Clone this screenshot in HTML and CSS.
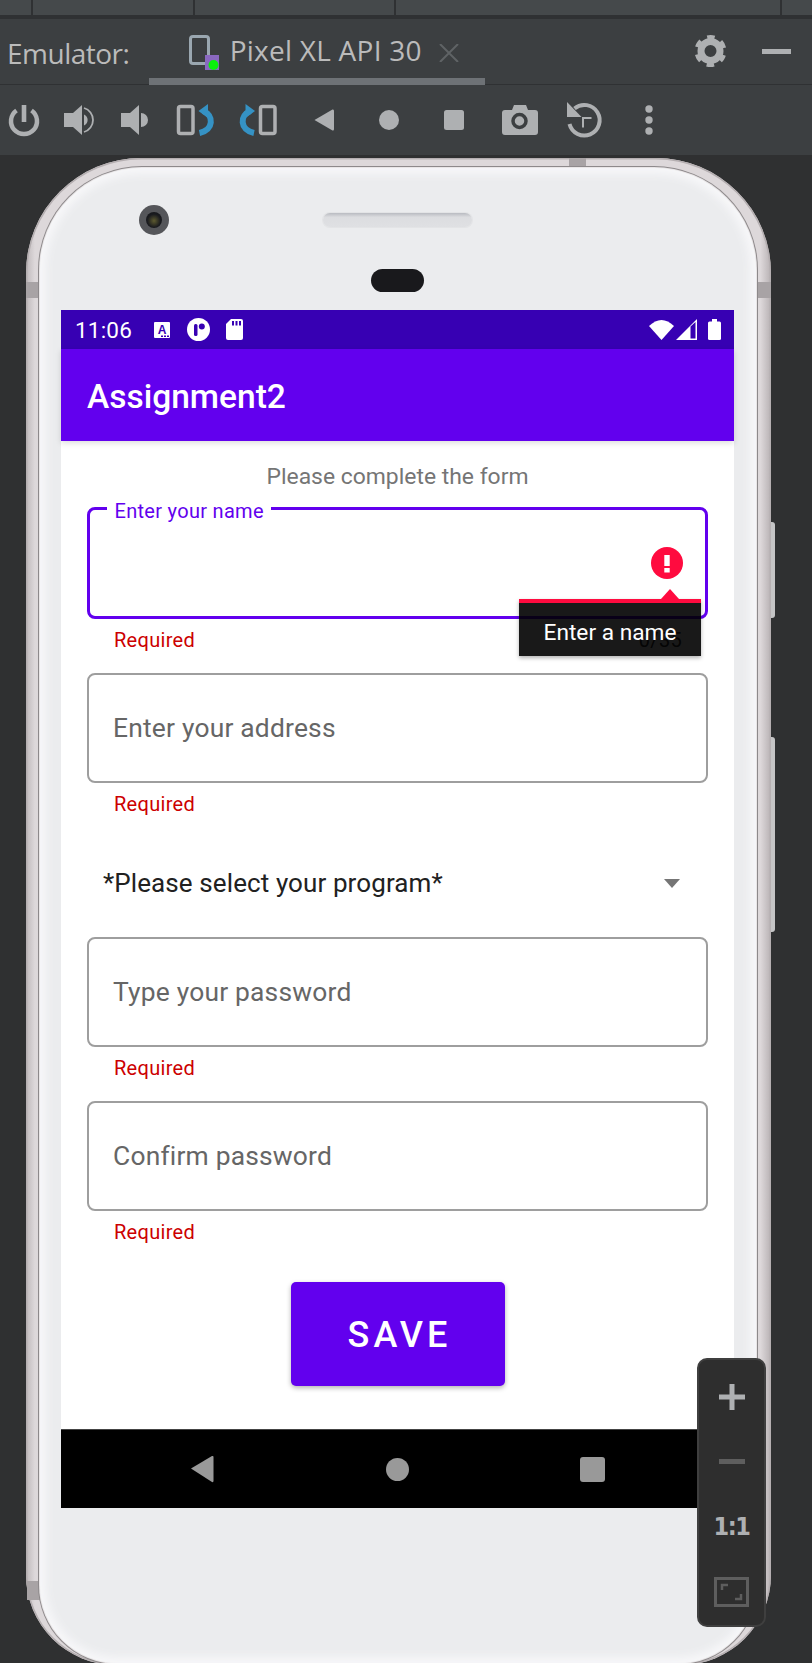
FILE: index.html
```html
<!DOCTYPE html>
<html lang="en">
<head>
<meta charset="utf-8">
<title>Android Emulator - Assignment2</title>
<link rel="stylesheet" href="styles.css">
</head>
<body>
<div class="top-strip">
  <div class="cell cell-a"></div><div class="cell cell-b"></div><div class="cell cell-c"></div><div class="cell cell-d"></div><div class="cell cell-e"></div>
</div>
<header class="tabbar">
  <span class="tab-label">Emulator:</span>
  <div class="tab">
    <svg class="tab-icon" viewBox="186 34 36 38" width="36" height="38">
      <rect x="190.5" y="37.5" width="18" height="27" rx="2.5" fill="none" stroke="#9aa7b0" stroke-width="3"/>
      <rect x="205" y="56" width="14" height="15" fill="#8a68c0"/>
      <circle cx="213.5" cy="66" r="5" fill="#0bf00b"/>
    </svg>
    <span class="tab-title">Pixel XL API 30</span>
    <svg class="tab-close" viewBox="0 0 20 18" width="20" height="18"><path d="M1 0 19 18M19 0 1 18" stroke="#5f6365" stroke-width="2" fill="none"/></svg>
  </div>
  <div class="tab-actions">
    <svg viewBox="694 33 36 36" width="36" height="36">
      <circle cx="711.5" cy="51" r="9.5" fill="none" stroke="#aeb0b2" stroke-width="7"/>
      <circle cx="711.5" cy="51" r="14" fill="none" stroke="#aeb0b2" stroke-width="4" stroke-dasharray="7.33 7.33" stroke-dashoffset="3.66" transform="rotate(30 711.5 51)"/>
    </svg>
    <span class="minimize"></span>
  </div>
</header>
<nav class="toolbar">
  <div class="tool-group tool-group-a">
    <svg viewBox="6 103 36 36" width="36" height="36"><path d="M16.5 111.5A13 13 0 1 0 31.5 111.5" fill="none" stroke="#aeb0b2" stroke-width="4.5"/><rect x="21.7" y="106" width="4.6" height="17" fill="#aeb0b2"/></svg>
    <svg viewBox="60 103 36 36" width="36" height="36"><path d="M64 114H73L82 106V136L73 128H64Z" fill="#aeb0b2"/><path d="M84 115.500A6 6 0 0 1 84 126.500Z" fill="#aeb0b2"/><path d="M84 109A12.500 12.500 0 0 1 84 133" fill="none" stroke="#aeb0b2" stroke-width="1.800"/></svg>
    <svg viewBox="114 103 36 36" width="36" height="36"><path d="M121 114H130L139 106V136L130 128H121Z" fill="#aeb0b2"/><path d="M141 114A7 7 0 0 1 141 128Z" fill="#aeb0b2"/></svg>
  </div>
  <div class="tool-group tool-group-b">
    <svg viewBox="176 103 36 36" width="36" height="36"><rect x="178.500" y="107.500" width="14.500" height="27" rx="2" fill="none" stroke="#aeb0b2" stroke-width="3.500"/><path d="M203 112C214 116 214 131 199.500 134" fill="none" stroke="#3592c4" stroke-width="6"/><path d="M198.500 112 208 105V119Z" fill="#3592c4"/></svg>
    <svg viewBox="241 103 36 36" width="36" height="36"><rect x="260.500" y="107.500" width="14.500" height="27" rx="2" fill="none" stroke="#aeb0b2" stroke-width="3.500"/><path d="M250.500 112C239.500 116 239.500 131 254 134" fill="none" stroke="#3592c4" stroke-width="6"/><path d="M255 112 245.500 105V119Z" fill="#3592c4"/></svg>
    <svg viewBox="306 103 36 36" width="36" height="36"><path d="M314.500 121 332.500 110.500Q334 110 334 112V130Q334 132 332.500 131.500Z" fill="#aeb0b2"/></svg>
    <svg viewBox="371 103 36 36" width="36" height="36"><circle cx="389" cy="121" r="10" fill="#aeb0b2"/></svg>
    <svg viewBox="436 103 36 36" width="36" height="36"><rect x="444" y="111" width="20" height="20" rx="2.500" fill="#aeb0b2"/></svg>
    <svg viewBox="501 103 36 36" width="36" height="36"><path d="M505 111H512L514 106H526L528 111H535Q538 111 538 114V133Q538 136 535 136H505Q502 136 502 133V114Q502 111 505 111Z" fill="#aeb0b2"/><circle cx="519.500" cy="122" r="6.500" fill="#aeb0b2" stroke="#3c3f41" stroke-width="3.500"/></svg>
    <svg viewBox="566 103 36 36" width="36" height="36"><path d="M574.500 109.500A15.300 15.300 0 1 1 569.500 125" fill="none" stroke="#aeb0b2" stroke-width="4"/><path d="M567 103 581.500 118H567Z" fill="#aeb0b2"/><path d="M591.500 119H583V128.500" fill="none" stroke="#aeb0b2" stroke-width="2"/></svg>
    <svg viewBox="631 103 36 36" width="36" height="36"><circle cx="649" cy="110" r="3.700" fill="#aeb0b2"/><circle cx="649" cy="121" r="3.700" fill="#aeb0b2"/><circle cx="649" cy="132" r="3.700" fill="#aeb0b2"/></svg>
  </div>
</nav>
<main class="stage">
  <div class="phone">
    <span class="slit slit-left-top"></span>
    <span class="slit slit-right-top"></span>
    <span class="slit slit-top"></span>
    <span class="slit slit-left-bottom"></span>
    <span class="side-key side-key-power"></span>
    <span class="side-key side-key-volume"></span>
    <div class="bezel">
      <div class="hardware">
        <div class="hardware-row">
          <span class="camera"><span class="camera-lens"></span></span>
          <span class="speaker"></span>
        </div>
        <span class="sensor"></span>
      </div>
      <div class="screen">
        <div class="status-bar">
          <span class="clock">11:06</span>
          <svg class="st-a" viewBox="154 322 16 16" width="16" height="16"><rect x="154" y="322" width="16" height="16" rx="1" fill="#fff"/><text x="162" y="334" class="a-glyph">A</text><rect x="161" y="335.500" width="2" height="1.500" fill="#3700b3"/><rect x="164" y="335.500" width="2" height="1.500" fill="#3700b3"/><rect x="167" y="335.500" width="2" height="1.500" fill="#3700b3"/></svg>
          <svg class="st-circle" viewBox="187 318 23 23" width="23" height="23"><circle cx="198.500" cy="329.500" r="11.500" fill="#fff"/><rect x="194" y="324" width="3.500" height="12" rx="1.500" fill="#3700b3"/><circle cx="201.800" cy="326.500" r="3" fill="#3700b3"/></svg>
          <svg class="st-sd" viewBox="226 319 17 21" width="17" height="21"><path d="M231 319H241Q243 319 243 321V338Q243 340 241 340H228Q226 340 226 338V324Z" fill="#fff"/><rect x="232" y="321" width="2" height="4.500" fill="#3700b3"/><rect x="235.500" y="321" width="2" height="4.500" fill="#3700b3"/><rect x="239" y="321" width="2" height="4.500" fill="#3700b3"/></svg>
          <span class="status-spacer"></span>
          <svg viewBox="649 319 25 20" width="25" height="20"><path d="M649 325Q661.500 313 674 325L661.500 339Z" fill="#fff"/></svg>
          <svg class="st-signal" viewBox="676 319 21 21" width="21" height="21"><path d="M676 340 697 319V340Z" fill="#fff"/><path d="M690.500 326.500 695.500 322V338.500H690.500Z" fill="#3700b3"/></svg>
          <svg class="st-battery" viewBox="708 319 13 21" width="13" height="21"><rect x="708" y="321.500" width="13" height="18.500" rx="1.500" fill="#fff"/><rect x="712" y="319" width="5" height="3" fill="#fff"/></svg>
        </div>
        <div class="app-bar">Assignment2</div>
        <form class="form">
          <p class="form-title">Please complete the form</p>
          <div class="field-group">
            <div class="field field-focus">
              <span class="float-label">Enter your name</span>
              <svg class="error-icon" viewBox="0 0 32 32" width="32" height="32"><circle cx="16" cy="16" r="16" fill="#ff0b3f"/><rect x="13.300" y="8" width="5.400" height="11" fill="#fff"/><rect x="13.300" y="21" width="5.400" height="4.500" fill="#fff"/></svg>
            </div>
            <div class="help help-first"><span>Required</span><span class="counter">0/35</span></div>
            <div class="tooltip">Enter a name</div>
          </div>
          <div class="field-group">
            <div class="field">Enter your address</div>
            <div class="help"><span>Required</span></div>
          </div>
          <div class="spinner">
            <span>*Please select your program*</span>
            <span class="spinner-arrow"></span>
          </div>
          <div class="field-group">
            <div class="field">Type your password</div>
            <div class="help help-first"><span>Required</span></div>
          </div>
          <div class="field-group">
            <div class="field">Confirm password</div>
            <div class="help help-last"><span>Required</span></div>
          </div>
          <button class="save" type="button">SAVE</button>
        </form>
        <div class="nav-bar">
          <svg viewBox="0 0 24 28" width="24" height="28"><path d="M1 13.500 22 1Q23.500 .5 23.500 2V26Q23.500 27.500 22 27Z" fill="#999"/></svg>
          <span class="nav-home"></span>
          <span class="nav-recent"></span>
        </div>
      </div>
    </div>
  </div>
</main>
<aside class="zoom-panel">
  <div class="zoom-item"><svg viewBox="0 0 26 26" width="26" height="26"><path d="M10.500 0H15.500V10.500H26V15.500H15.500V26H10.500V15.500H0V10.500H10.500Z" fill="#aeb0b2"/></svg></div>
  <div class="zoom-item"><span class="zoom-minus"></span></div>
  <div class="zoom-item zoom-ratio">1:1</div>
  <div class="zoom-item"><svg viewBox="0 0 35 30" width="35" height="30"><rect x="1.500" y="1.500" width="32" height="27" fill="none" stroke="#5e5e5e" stroke-width="3"/><path d="M8 13V8H14M27 17V22H21" fill="none" stroke="#5e5e5e" stroke-width="2.500"/></svg></div>
</aside>
</body>
</html>
```
FILE: styles.css
```css
* { box-sizing: border-box; }
html, body { margin: 0; padding: 0; }
body {
  position: relative;
  width: 812px;
  height: 1663px;
  overflow: hidden;
  display: flex;
  flex-direction: column;
  background: #2f3031;
  font-family: Roboto, "Noto Sans", sans-serif;
}

/* IDE chrome */
.top-strip {
  height: 19px;
  flex: none;
  display: flex;
  background: #45494b;
  border-bottom: 4px solid #2f3133;
}
.cell { height: 15px; border-right: 2px solid #2f3133; }
.cell-a { width: 33px; }
.cell-b { width: 162px; }
.cell-c { width: 201px; }
.cell-d { width: 386px; }
.cell-e { flex: 1; border-right: 0; }

.tabbar {
  height: 66px;
  flex: none;
  display: flex;
  align-items: stretch;
  background: #3c3f41;
  border-bottom: 1px solid #2f3133;
  font-family: "Open Sans", sans-serif;
  color: #bbbbbb;
}
.tab-label {
  width: 149px;
  padding-left: 7px;
  padding-top: 3px;
  display: flex;
  align-items: center;
  font-size: 28px;
  letter-spacing: -.5px;
}
.tab {
  width: 337px;
  display: flex;
  align-items: center;
  padding: 0 0 4px 37px;
  border-bottom: 7px solid #6e7276;
  margin-bottom: -1px;
}
.tab-icon { flex: none; margin-top: 11px; }
.tab-title {
  margin-left: 8px;
  margin-top: 6px;
  font-size: 28px;
  letter-spacing: .25px;
  white-space: nowrap;
}
.tab-close { flex: none; margin-left: 17px; margin-top: 12px; }
.tab-actions {
  flex: 1;
  display: flex;
  align-items: center;
  padding: 0 21px 0 208px;
  gap: 33px;
}
.tab-actions svg { flex: none; margin-top: -2px; }
.minimize { width: 29px; height: 5px; background: #aeb0b2; flex: none; }

.toolbar {
  height: 70px;
  flex: none;
  display: flex;
  align-items: center;
  padding: 0 0 0 6px;
  background: #3c3f41;
}
.toolbar svg { overflow: visible; flex: none; }
.tool-group { display: flex; }
.tool-group-a { gap: 18px; }
.tool-group-b { gap: 29px; margin-left: 26px; }

/* Device */
.stage { flex: 1; min-height: 0; padding: 3px 0 0 26px; overflow: hidden; }
.phone {
  position: relative;
  width: 745px;
  height: 1507px;
  padding: 10px 15px 0 14px;
  border-radius: 115px 115px 90px 90px;
  background: linear-gradient(90deg, #bfb9bb, #ddd8da 1.2%, #ddd8da 98.6%, #b7b1b3);
  box-shadow: inset 0 0 0 1.500px #b5afb1;
}
.slit { position: absolute; background: #a8a3a5; }
.slit-left-top { left: 0; top: 124px; width: 14px; height: 16px; }
.slit-right-top { right: 0; top: 124px; width: 15px; height: 16px; }
.slit-left-bottom { left: 1px; top: 1423px; width: 15px; height: 19px; }
.slit-top { left: 543px; top: 0; width: 17px; height: 9px; }
.side-key {
  position: absolute;
  right: -4px;
  width: 4px;
  background: #c4c4c5;
  border-radius: 0 3px 3px 0;
}
.side-key-power { top: 364px; height: 96px; }
.side-key-volume { top: 579px; height: 195px; }

.bezel {
  height: 1495px;
  padding: 0 22px 0 21px;
  border-radius: 102px 102px 78px 78px;
  background: #ebecee;
  box-shadow: 0 0 0 1px #e9e6e7, 0 0 0 2px #8d898b, inset 0 0 9px 6px #f7f7f9;
  position: relative;
}
.hardware { height: 142px; padding-top: 37px; margin-left: -21px; }
.hardware-row { display: flex; align-items: center; padding-left: 99px; }
.camera {
  width: 30px;
  height: 30px;
  border-radius: 50%;
  background: #55565a;
  display: flex;
  align-items: center;
  justify-content: center;
}
.camera-lens {
  width: 16px;
  height: 16px;
  border-radius: 50%;
  background: radial-gradient(circle at 50% 55%, #5d5a30 0, #1a1b1f 55%, #101114 100%);
}
.speaker {
  margin-left: 154px;
  width: 149px;
  height: 14px;
  border-radius: 7px;
  background: linear-gradient(#b9bbc1, #dcdde0 30%, #dfe0e3);
  box-shadow: 0 0 0 1px #e3e4e6;
}
.sensor {
  display: block;
  width: 53px;
  height: 23px;
  margin: 34px 0 0 331px;
  border-radius: 12px;
  background: #19191c;
}

/* Android screen */
.screen { height: 1198px; background: #fff; display: flex; flex-direction: column; }
.status-bar {
  height: 39px;
  flex: none;
  display: flex;
  align-items: center;
  padding: 0 13px 0 14px;
  background: #3700b3;
  color: #fff;
}
.clock { width: 57px; font-size: 22.500px; letter-spacing: .2px; white-space: nowrap; padding-top: 1px; }
.st-a { margin-left: 22px; }
.st-circle { margin-left: 17px; }
.st-sd { margin-left: 16px; }
.status-spacer { flex: 1; }
.st-signal { margin-left: 2px; }
.st-battery { margin-left: 11px; }
.a-glyph {
  font-family: "Liberation Sans", sans-serif;
  font-size: 12px;
  font-weight: 700;
  fill: #3700b3;
  text-anchor: middle;
}
.app-bar {
  height: 92px;
  flex: none;
  display: flex;
  align-items: center;
  padding: 3px 0 0 26px;
  background: #6200ee;
  color: #fff;
  font-size: 33.500px;
  font-weight: 500;
  position: relative;
  box-shadow: 0 2px 6px rgba(0, 0, 0, .14);
}
.form {
  flex: 1;
  min-height: 0;
  margin: 0;
  padding: 0 26px;
  display: flex;
  flex-direction: column;
}
.form-title {
  height: 66px;
  margin: 0;
  padding-top: 4px;
  display: flex;
  align-items: center;
  justify-content: center;
  font-size: 22.900px;
  color: #757575;
}
.field-group { position: relative; }
.field {
  height: 110px;
  display: flex;
  align-items: center;
  padding-left: 24px;
  border: 2px solid #9e9e9e;
  border-radius: 8px;
  font-size: 26.400px;
  color: #666;
  letter-spacing: .2px;
}
.field-focus {
  height: 112px;
  position: relative;
  justify-content: flex-end;
  padding-right: 22px;
  border: 3px solid #6200ee;
}
.float-label {
  position: absolute;
  left: 17px;
  top: -11px;
  padding: 0 7.500px;
  background: #fff;
  font-size: 20px;
  line-height: 24px;
  color: #6200ee;
  letter-spacing: .3px;
}
.help {
  height: 42px;
  padding: 0 26px 0 27px;
  display: flex;
  justify-content: space-between;
  align-items: center;
  font-size: 20px;
  color: #cc0000;
  letter-spacing: .3px;
}
.help-first { height: 54px; align-items: flex-start; padding-top: 9px; }
.help-last { height: 71px; align-items: flex-start; padding-top: 9px; }
.counter { color: #333; }
.tooltip {
  position: absolute;
  left: 432px;
  top: 92px;
  width: 182px;
  height: 57px;
  padding-top: 5px;
  display: flex;
  align-items: center;
  justify-content: center;
  background: rgba(0, 0, 0, .9);
  border-top: 4px solid #ff0b3f;
  box-shadow: 0 2px 4px rgba(0, 0, 0, .3);
  color: #fff;
  font-size: 22.700px;
}
.tooltip::before {
  content: "";
  position: absolute;
  left: 142px;
  top: -14px;
  border-left: 9px solid transparent;
  border-right: 9px solid transparent;
  border-bottom: 10px solid #ff0b3f;
}
.spinner {
  height: 112px;
  padding: 4px 28px 0 16px;
  display: flex;
  align-items: center;
  justify-content: space-between;
  font-size: 26px;
  color: #212121;
  letter-spacing: .1px;
}
.spinner-arrow {
  border-left: 8px solid transparent;
  border-right: 8px solid transparent;
  border-top: 9px solid #757575;
}
.save {
  align-self: center;
  width: 214px;
  height: 104px;
  padding: 2px 0 0 4px;
  border: 0;
  border-radius: 5px;
  background: #6200ee;
  color: #fff;
  font-family: Roboto, sans-serif;
  font-size: 36px;
  font-weight: 500;
  letter-spacing: 4px;
  box-shadow: 0 2px 5px rgba(0, 0, 0, .3);
}
.nav-bar {
  height: 79px;
  flex: none;
  display: flex;
  align-items: center;
  background: #000;
  border-top: 1px solid #444;
  padding-left: 129px;
}
.nav-home {
  width: 23px;
  height: 23px;
  border-radius: 50%;
  background: #999;
  margin-left: 172px;
}
.nav-recent {
  width: 25px;
  height: 25px;
  border-radius: 3px;
  background: #999;
  margin-left: 171px;
}

/* Floating zoom controls */
.zoom-panel {
  position: absolute;
  left: 697px;
  top: 1358px;
  width: 69px;
  height: 269px;
  padding-top: 4px;
  background: #2e2e2e;
  border: 2px solid #3f3f3f;
  border-radius: 10px;
}
.zoom-item { height: 65px; display: flex; align-items: center; justify-content: center; }
.zoom-minus { width: 26px; height: 5px; background: #5e5e5e; }
.zoom-ratio {
  font-family: "DejaVu Sans", sans-serif;
  font-stretch: condensed;
  font-weight: 700;
  font-size: 25px;
  letter-spacing: -1.500px;
  color: #aeb0b2;
}
```
